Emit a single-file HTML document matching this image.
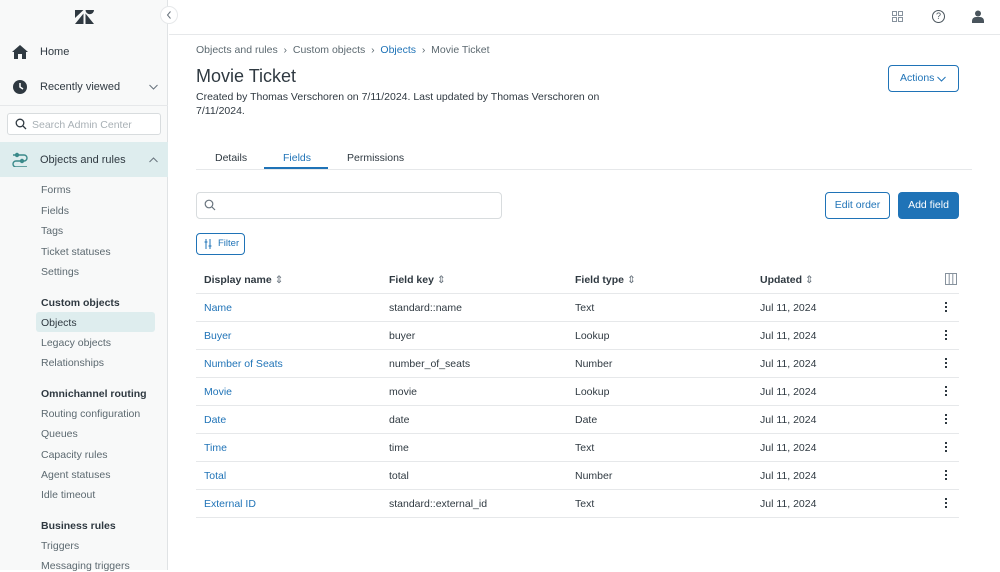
<!DOCTYPE html>
<html><head><style>
*{box-sizing:border-box;margin:0;padding:0}
body{width:1000px;height:570px;overflow:hidden;font-family:"Liberation Sans",sans-serif;color:#2f3941;background:#fff;position:relative;font-size:11px}
.side{position:absolute;left:0;top:0;width:168px;height:570px;background:#f8f9f9;border-right:1px solid #e0e3e5}
.abs{position:absolute}
.nav{position:absolute;left:40px;font-size:11px;color:#2f3941}
.sub{position:absolute;left:41px;font-size:10.5px;color:#5c6970}
.grp{position:absolute;left:41px;font-size:10.5px;font-weight:bold;color:#2f3941}
.top{position:absolute;left:169px;top:0;right:0;height:35px;border-bottom:1px solid #e6e8ea}
.main{position:absolute;left:196px}
.th{position:absolute;top:274px;font-weight:bold;font-size:10.5px}
.row{position:absolute;left:196px;width:763px;height:28px;border-bottom:1px solid #e6e8ea}
.row span{position:absolute;top:8px;font-size:10.5px}
.row .a{left:8px;color:#1f73b7}.row .b{left:193px}.row .c{left:379px}.row .d{left:564px}
.dots{position:absolute;left:749px;top:8px;width:3px}
.dots i{display:block;width:2px;height:2px;background:#2f3941;margin-bottom:2px}
</style></head><body>
<div class="side">
<svg class="abs" style="left:75px;top:10px" width="19" height="14" viewBox="0 0 19 14" fill="#2f3941"><path d="M0 0H8.5L0 8z"/><path d="M8.5 3.5V14H0z"/><path d="M10.5 0a4.25 4.25 0 0 0 8.5 0z"/><path d="M10.5 14V3.5L19 14z"/></svg>
<div class="abs" style="left:160px;top:6px;width:18px;height:18px;border-radius:50%;background:#fff;border:1px solid #e6e8ea"></div>
<svg class="abs" style="left:166px;top:11px" width="6" height="8" viewBox="0 0 6 8"><path d="M4.5 .5L1.5 4l3 3.5" stroke="#68737d" fill="none"/></svg>
<svg class="abs" style="left:12px;top:45px" width="16" height="14" viewBox="0 0 16 14"><path d="M8 0L0 7h2v7h4V9h4v5h4V7h2z" fill="#2f3941"/></svg>
<div class="nav" style="top:46px">Home</div>
<svg class="abs" style="left:13px;top:80px" width="14" height="14" viewBox="0 0 14 14"><circle cx="7" cy="7" r="7" fill="#2f3941"/><path d="M7 3v4l3 2" stroke="#fff" stroke-width="1.5" fill="none"/></svg>
<div class="nav" style="top:81px">Recently viewed</div>
<svg class="abs" style="left:149px;top:84px" width="9" height="6" viewBox="0 0 9 6"><path d="M.5 1l4 4 4-4" stroke="#68737d" fill="none"/></svg>
<div class="abs" style="left:0;top:105px;width:168px;border-top:1px solid #e6e8ea"></div>
<div class="abs" style="left:7px;top:113px;width:154px;height:22px;background:#fff;border:1px solid #d8dcde;border-radius:3px"></div>
<svg class="abs" style="left:15px;top:118px" width="12" height="12" viewBox="0 0 12 12"><circle cx="5" cy="5" r="3.8" stroke="#2f3941" stroke-width="1.3" fill="none"/><path d="M8 8l3 3" stroke="#2f3941" stroke-width="1.3"/></svg>
<div class="abs" style="left:32px;top:119px;font-size:10.5px;color:#a8b0b5">Search Admin Center</div>
<div class="abs" style="left:0;top:142px;width:168px;height:35px;background:#deedee"></div>
<svg class="abs" style="left:12px;top:151px" width="16" height="16" viewBox="0 0 16 16" fill="none" stroke="#3b8a8a" stroke-width="1.4"><path d="M1 4h11a3 3 0 0 1 0 6H4a3 3 0 0 0 0 6h11"/><circle cx="5" cy="4" r="1.5" fill="#3b8a8a"/><circle cx="10" cy="10" r="1.5" fill="#3b8a8a"/></svg>
<div class="nav" style="top:154px">Objects and rules</div>
<svg class="abs" style="left:149px;top:157px" width="9" height="6" viewBox="0 0 9 6"><path d="M.5 5l4-4 4 4" stroke="#68737d" fill="none"/></svg>
<div class="sub" style="top:184px">Forms</div>
<div class="sub" style="top:205px">Fields</div>
<div class="sub" style="top:225px">Tags</div>
<div class="sub" style="top:246px">Ticket statuses</div>
<div class="sub" style="top:266px">Settings</div>
<div class="grp" style="top:297px">Custom objects</div>
<div class="abs" style="left:36px;top:312px;width:119px;height:20px;background:#deedee;border-radius:3px"></div>
<div class="sub" style="top:317px;color:#2f3941">Objects</div>
<div class="sub" style="top:337px">Legacy objects</div>
<div class="sub" style="top:357px">Relationships</div>
<div class="grp" style="top:388px">Omnichannel routing</div>
<div class="sub" style="top:408px">Routing configuration</div>
<div class="sub" style="top:428px">Queues</div>
<div class="sub" style="top:449px">Capacity rules</div>
<div class="sub" style="top:469px">Agent statuses</div>
<div class="sub" style="top:489px">Idle timeout</div>
<div class="grp" style="top:520px">Business rules</div>
<div class="sub" style="top:540px">Triggers</div>
<div class="sub" style="top:560px">Messaging triggers</div>
</div>
<div class="top"></div>
<svg class="abs" style="left:892px;top:11px" width="11" height="11" viewBox="0 0 11 11" fill="none" stroke="#87929d"><rect x=".5" y=".5" width="4" height="4"/><rect x="6.5" y=".5" width="4" height="4"/><rect x=".5" y="6.5" width="4" height="4"/><rect x="6.5" y="6.5" width="4" height="4"/></svg>
<div class="abs" style="left:932px;top:10px;width:13px;height:13px;border:1px solid #49545c;border-radius:50%;font-size:9px;text-align:center;line-height:11px;color:#49545c">?</div>
<svg class="abs" style="left:972px;top:10px" width="12" height="13" viewBox="0 0 12 13"><circle cx="6" cy="3.5" r="3" fill="#49545c"/><path d="M0 13v-2a4 4 0 0 1 4-4h4a4 4 0 0 1 4 4v2z" fill="#49545c"/></svg>
<div class="main" style="top:44px;font-size:10.5px;color:#5c6970">Objects and rules &nbsp;›&nbsp; Custom objects &nbsp;›&nbsp; <span style="color:#1f73b7">Objects</span> &nbsp;›&nbsp; Movie Ticket</div>
<div class="main" style="top:66px;font-size:18px">Movie Ticket</div>
<div class="main" style="top:90px;font-size:10.5px;line-height:14px;white-space:nowrap">Created by Thomas Verschoren on 7/11/2024. Last updated by Thomas Verschoren on<br>7/11/2024.</div>
<div class="abs" style="left:888px;top:65px;width:71px;height:27px;border:1px solid #1f73b7;border-radius:4px;color:#1f73b7;font-size:10.5px;line-height:25px;padding-left:11px">Actions</div>
<svg class="abs" style="left:937px;top:76px" width="9" height="6" viewBox="0 0 9 6"><path d="M.5 1l4 4 4-4" stroke="#1f73b7" fill="none"/></svg>
<div class="abs" style="left:196px;top:169px;width:776px;border-top:1px solid #e6e8ea"></div>
<div class="abs" style="left:215px;top:152px;font-size:10.5px;color:#2f3941">Details</div>
<div class="abs" style="left:283px;top:152px;font-size:10.5px;color:#1f73b7">Fields</div>
<div class="abs" style="left:264px;top:167px;width:64px;height:2px;background:#1f73b7"></div>
<div class="abs" style="left:347px;top:152px;font-size:10.5px;color:#2f3941">Permissions</div>
<div class="abs" style="left:196px;top:192px;width:306px;height:27px;border:1px solid #d8dcde;border-radius:4px"></div>
<svg class="abs" style="left:204px;top:199px" width="12" height="12" viewBox="0 0 12 12"><circle cx="5" cy="5" r="3.8" stroke="#68737d" stroke-width="1.2" fill="none"/><path d="M8 8l3 3" stroke="#68737d" stroke-width="1.2"/></svg>
<div class="abs" style="left:825px;top:192px;width:65px;height:27px;border:1px solid #1f73b7;border-radius:4px;color:#1f73b7;font-size:10.5px;line-height:25px;text-align:center">Edit order</div>
<div class="abs" style="left:898px;top:192px;width:61px;height:27px;background:#1f73b7;border-radius:4px;color:#fff;font-size:10.5px;line-height:27px;text-align:center">Add field</div>
<div class="abs" style="left:196px;top:233px;width:49px;height:22px;border:1px solid #1f73b7;border-radius:4px;color:#1f73b7;font-size:9.5px;line-height:20px;padding-left:21px">Filter</div>
<svg class="abs" style="left:204px;top:239px" width="8" height="10" viewBox="0 0 8 10" stroke="#1f73b7" fill="none"><path d="M2 0v10M6 0v10"/><path d="M0.5 3h3M4.5 7h3"/></svg>
<div class="th" style="left:204px">Display name <span style="font-weight:normal;color:#68737d">⇕</span></div>
<div class="th" style="left:389px">Field key <span style="font-weight:normal;color:#68737d">⇕</span></div>
<div class="th" style="left:575px">Field type <span style="font-weight:normal;color:#68737d">⇕</span></div>
<div class="th" style="left:760px">Updated <span style="font-weight:normal;color:#68737d">⇕</span></div>
<svg class="abs" style="left:945px;top:273px" width="12" height="12" viewBox="0 0 12 12" fill="none" stroke="#87929d"><rect x=".5" y=".5" width="11" height="11"/><path d="M4.2 0v12M7.8 0v12"/></svg>
<div class="abs" style="left:196px;top:293px;width:763px;border-top:1px solid #e6e8ea"></div>
<div class="row" style="top:294px"><span class="a">Name</span><span class="b">standard::name</span><span class="c">Text</span><span class="d">Jul 11, 2024</span><div class="dots"><i></i><i></i><i></i></div></div>
<div class="row" style="top:322px"><span class="a">Buyer</span><span class="b">buyer</span><span class="c">Lookup</span><span class="d">Jul 11, 2024</span><div class="dots"><i></i><i></i><i></i></div></div>
<div class="row" style="top:350px"><span class="a">Number of Seats</span><span class="b">number_of_seats</span><span class="c">Number</span><span class="d">Jul 11, 2024</span><div class="dots"><i></i><i></i><i></i></div></div>
<div class="row" style="top:378px"><span class="a">Movie</span><span class="b">movie</span><span class="c">Lookup</span><span class="d">Jul 11, 2024</span><div class="dots"><i></i><i></i><i></i></div></div>
<div class="row" style="top:406px"><span class="a">Date</span><span class="b">date</span><span class="c">Date</span><span class="d">Jul 11, 2024</span><div class="dots"><i></i><i></i><i></i></div></div>
<div class="row" style="top:434px"><span class="a">Time</span><span class="b">time</span><span class="c">Text</span><span class="d">Jul 11, 2024</span><div class="dots"><i></i><i></i><i></i></div></div>
<div class="row" style="top:462px"><span class="a">Total</span><span class="b">total</span><span class="c">Number</span><span class="d">Jul 11, 2024</span><div class="dots"><i></i><i></i><i></i></div></div>
<div class="row" style="top:490px"><span class="a">External ID</span><span class="b">standard::external_id</span><span class="c">Text</span><span class="d">Jul 11, 2024</span><div class="dots"><i></i><i></i><i></i></div></div>
</body></html>
